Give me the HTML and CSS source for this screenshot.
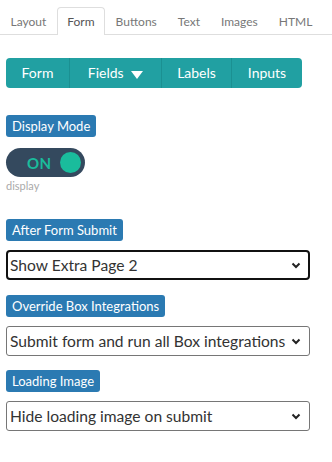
FILE: index.html
```html
<html>
    <head>
        <title>
            Form Settings
        </title>
        <link rel="stylesheet" href="styles.css">
    </head>
    <body>
        <div class="tabs">
            <div class="tab">Layout</div>
            <div class="tab active">Form</div>
            <div class="tab">Buttons</div>
            <div class="tab">Text</div>
            <div class="tab">Images</div>
            <div class="tab">HTML</div>
        </div>
        <div class="panel">
            <div class="btn-group">
                <div class="btn btn-form">Form</div>
                <div class="btn btn-fields">Fields <span class="caret"></span></div>
                <div class="btn btn-labels">Labels</div>
                <div class="btn btn-inputs">Inputs</div>
            </div>

            <div class="field field-display">
                <span class="label">Display Mode</span>
                <div class="toggle">
                    <span class="toggle-text">ON</span>
                    <span class="toggle-knob"></span>
                </div>
                <div class="hint">display</div>
            </div>

            <div class="field field-submit">
                <span class="label">After Form Submit</span>
                <div class="select focused">
                    <span>Show Extra Page 2</span>
                    <svg class="chevron" width="10" height="7" viewBox="0 0 10 7"><path d="M1.5 1.5 L5 5 L8.5 1.5" fill="none" stroke="#222" stroke-width="2"/></svg>
                </div>
            </div>

            <div class="field field-box">
                <span class="label">Override Box Integrations</span>
                <div class="select">
                    <span>Submit form and run all Box integrations</span>
                    <svg class="chevron" width="10" height="7" viewBox="0 0 10 7"><path d="M1.5 1.5 L5 5 L8.5 1.5" fill="none" stroke="#222" stroke-width="2"/></svg>
                </div>
            </div>

            <div class="field field-loading">
                <span class="label">Loading Image</span>
                <div class="select">
                    <span>Hide loading image on submit</span>
                    <svg class="chevron" width="10" height="7" viewBox="0 0 10 7"><path d="M1.5 1.5 L5 5 L8.5 1.5" fill="none" stroke="#222" stroke-width="2"/></svg>
                </div>
            </div>
        </div>
    </body>
</html>
```

FILE: styles.css
```css
body {
    margin: 0;
    font-family: Lato, "Open Sans", sans-serif;
    background-color: white;
}
.tabs {
    display: flex;
    height: 34px;
    border-bottom: 1px solid #dedede;
    box-sizing: content-box;
}
.tab {
    font-size: 12px;
    color: #777;
    padding: 0 9.5px;
    line-height: 27px;
    margin-top: 7px;
    border: 1px solid transparent;
    border-bottom: none;
}
.tab.active {
    color: #555;
    border-color: #dedede;
    border-radius: 4px 4px 0 0;
    background-color: white;
    margin-bottom: -1px;
}
.panel {
    padding: 23px 6px 0 6px;
}
.btn-group {
    display: flex;
    width: 296px;
    height: 30px;
    background-color: #21a0a2;
    border-radius: 4px;
    overflow: hidden;
}
.btn {
    color: white;
    font-size: 14px;
    line-height: 30px;
    text-align: center;
    border-right: 1px solid #1b9092;
}
.btn-form { width: 63px; }
.btn-fields { width: 91px; }
.btn-labels { width: 69px; }
.btn-inputs { flex: 1; border-right: none; }
.caret {
    display: inline-block;
    width: 0;
    height: 0;
    border-left: 6px solid transparent;
    border-right: 6px solid transparent;
    border-top: 8px solid white;
    margin-left: 4px;
    vertical-align: -1px;
}
.field {
    display: flex;
    flex-direction: column;
    align-items: flex-start;
}
.field-display { margin-top: 27px; }
.field-submit { margin-top: 26px; }
.field-box { margin-top: 15px; }
.field-loading { margin-top: 14px; }
.label {
    display: block;
    background-color: #2b7ab2;
    color: white;
    font-size: 13px;
    line-height: 22px;
    height: 22px;
    padding: 0 6px;
    border-radius: 3px;
}
.toggle {
    display: flex;
    align-items: center;
    margin-top: 11px;
    width: 79px;
    height: 29px;
    border-radius: 15px;
    background-color: #34495e;
    box-sizing: border-box;
    padding: 0 4px 0 21px;
}
.toggle-text {
    color: #1abc9c;
    font-size: 15px;
    font-weight: bold;
    letter-spacing: 0.5px;
    flex: 1;
}
.toggle-knob {
    width: 21px;
    height: 21px;
    border-radius: 50%;
    background-color: #1abc9c;
}
.hint {
    font-size: 11px;
    color: #aaa;
    line-height: 14px;
    margin-top: 2px;
}
.select {
    position: relative;
    margin-top: 9px;
    width: 304px;
    height: 30px;
    box-sizing: border-box;
    border: 1px solid #767676;
    border-radius: 3px;
    font-size: 15.6px;
    color: #333;
    line-height: 28px;
    padding-left: 3px;
    white-space: nowrap;
}
.select.focused {
    border: 2px solid #111;
    border-radius: 4px;
    line-height: 26px;
    padding-left: 2px;
}
.chevron {
    position: absolute;
    right: 8px;
    top: 11px;
}
.focused .chevron {
    right: 7px;
    top: 10px;
}
```
